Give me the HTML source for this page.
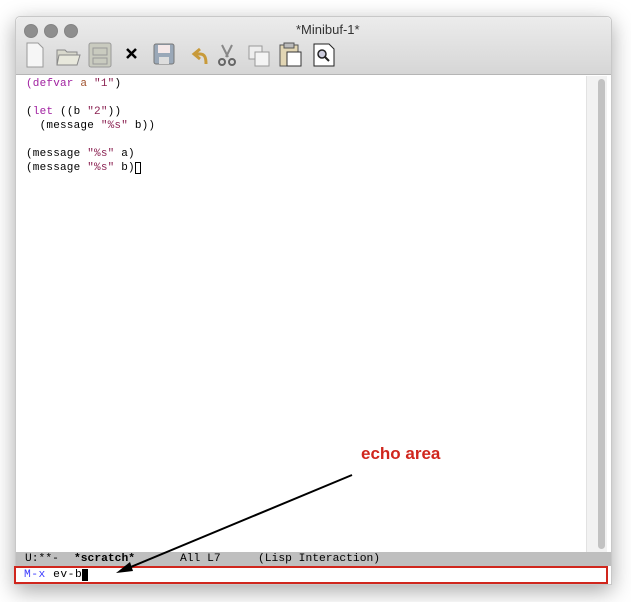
<!DOCTYPE html>
<html><head><style>
body{margin:0;width:631px;height:602px;background:#fff;position:relative;overflow:hidden;font-family:"Liberation Sans",sans-serif}
.win{position:absolute;left:15px;top:16px;width:595px;height:567px;background:#fff;border:1px solid #c8c8c8;border-radius:5px 5px 0 0;box-shadow:0 6px 22px rgba(0,0,0,.35)}
.tb{position:absolute;left:0;top:0;width:595px;height:57px;background:linear-gradient(#ececec,#d6d6d6);border-bottom:1px solid #b5b5b5;border-radius:5px 5px 0 0}
.dot{position:absolute;top:7px;width:12px;height:12px;border-radius:50%;background:#8e8e8e;border:1px solid #848484}
.title{position:absolute;top:5px;left:280px;font-size:13px;color:#333}
.code{position:absolute;left:10px;top:60px;font:11px/14px "Liberation Mono",monospace;letter-spacing:.2px;color:#000;white-space:pre}
.k{color:#a020a0}.s{color:#8b2252}.v{color:#a0522d}
.sb{position:absolute;left:570px;top:59px;width:20px;height:476px;background:#f2f2f2;border-left:1px solid #e2e2e2}
.th{position:absolute;left:11px;top:3px;width:7px;height:470px;background:#c2c2c2;border-radius:4px}
.ml{position:absolute;left:0;top:535px;width:595px;height:14px;background:#bfbfbf;font:11.3px/14px "Liberation Mono",monospace;white-space:pre}
.ml span{position:absolute;top:0}
.ea{position:absolute;left:-2px;top:549px;width:582px;height:14px;border:2px solid #d0261d;font:11.3px/14px "Liberation Mono",monospace;letter-spacing:.5px;white-space:pre;padding-left:8px;box-sizing:content-box;overflow:hidden}
.cur{display:inline-block;width:6px;height:12px;vertical-align:top;margin-top:1px;box-sizing:border-box}
</style></head><body>
<div class="win">
 <div class="tb">
  <div class="dot" style="left:8px"></div><div class="dot" style="left:28px"></div><div class="dot" style="left:48px"></div>
  <div class="title">*Minibuf-1*</div>
  <svg style="position:absolute;left:0;top:0" width="360" height="57">
   <path d="M11 26h11l5 5v19h-16z" fill="#f6f6f6" stroke="#999"/>
   <path d="M41 33h8l2 2h10v13h-20z" fill="#d8d8cc" stroke="#888"/><path d="M43 38h21l-3 10h-20z" fill="#e8e8dc" stroke="#888"/>
   <rect x="73" y="26" width="22" height="24" rx="2" fill="#c9cbbf" stroke="#999"/><path d="M77 31h14v7h-14zM77 41h14v6h-14z" fill="none" stroke="#999"/>
   <path d="M111 32l9 9M120 32l-9 9" stroke="#000" stroke-width="2.5"/>
   <rect x="138" y="27" width="20" height="20" rx="2" fill="#9aa8b8" stroke="#777"/><rect x="142" y="28" width="12" height="8" fill="#f4e8e8"/><rect x="143" y="40" width="10" height="7" fill="#ddd"/>
   <path d="M184 32l-6 5 6 5M178 37h6c5 0 6 4 6 10" fill="none" stroke="#c89a3a" stroke-width="3"/>
   <path d="M206 28l6 12M216 28l-6 12" stroke="#888" stroke-width="2"/><circle cx="206" cy="45" r="3" fill="none" stroke="#666" stroke-width="2"/><circle cx="216" cy="45" r="3" fill="none" stroke="#666" stroke-width="2"/>
   <rect x="233" y="29" width="13" height="13" fill="#eee" stroke="#999"/><rect x="239" y="35" width="14" height="14" fill="#f4f4f4" stroke="#999"/>
   <rect x="264" y="28" width="18" height="21" fill="#e2d6b4" stroke="#555"/><rect x="268" y="26" width="10" height="5" fill="#bbb" stroke="#555"/><rect x="271" y="35" width="14" height="14" fill="#fff" stroke="#333"/>
   <path d="M298 27h15l5 5v17h-20z" fill="#fff" stroke="#222"/><circle cx="306" cy="37" r="4" fill="#ccd" stroke="#222" stroke-width="1.5"/><path d="M309 40l4 4" stroke="#222" stroke-width="2"/>
  </svg>
 </div>
 <div class="code"><span class="k">(defvar</span> <span class="v">a</span> <span class="s">"1"</span>)

(<span class="k">let</span> ((b <span class="s">"2"</span>))
  (message <span class="s">"%s"</span> b))

(message <span class="s">"%s"</span> a)
(message <span class="s">"%s"</span> b)<span class="cur" style="border:1px solid #000"></span></div>
 <div class="sb"><div class="th"></div></div>
 <div class="ml"><span style="left:9px">U:**-</span><span style="left:58px"><b>*scratch*</b></span><span style="left:164px">All L7</span><span style="left:242px">(Lisp Interaction)</span></div>
 <div class="ea"><span style="color:#3a3aff">M-x</span> ev-b<span class="cur" style="background:#000"></span></div>
</div>
<div style="position:absolute;left:361px;top:444px;color:#d0261d;font-weight:bold;font-size:17px">echo area</div>
<svg style="position:absolute;left:0;top:0" width="631" height="602"><path d="M352 475L126 569" stroke="#000" stroke-width="2"/><path d="M116 573l14-11 3 9z" fill="#000"/></svg>
</body></html>
